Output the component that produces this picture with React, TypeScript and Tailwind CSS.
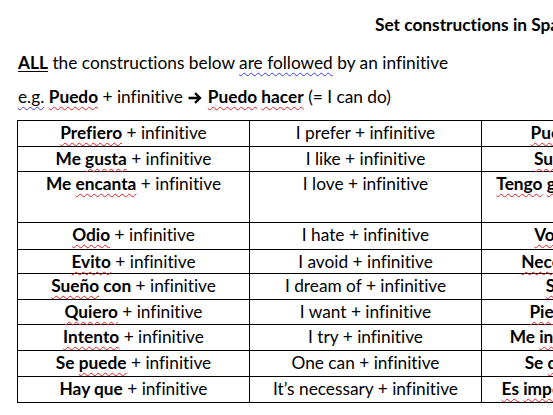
import React from 'react';

type Word = { t: string; sq?: boolean };
type Row = { h: string; a: Word[]; b: string; c: Word[] };

const ROWS: Row[] = [
    { h: 'h-[26px]', a: [{ t: 'Prefiero', sq: true }], b: 'I prefer', c: [{ t: 'Puedo', sq: true }] },
    { h: 'h-[25px]', a: [{ t: 'Me' }, { t: 'gusta', sq: true }], b: 'I like', c: [{ t: 'Suelo', sq: true }] },
    { h: 'h-[51px]', a: [{ t: 'Me' }, { t: 'encanta', sq: true }], b: 'I love', c: [{ t: 'Tengo', sq: true }, { t: 'ganas', sq: true }, { t: 'de' }] },
    { h: 'h-[27px]', a: [{ t: 'Odio', sq: true }], b: 'I hate', c: [{ t: 'Voy', sq: true }, { t: 'a' }] },
    { h: 'h-[24px]', a: [{ t: 'Evito', sq: true }], b: 'I avoid', c: [{ t: 'Necesito', sq: true }] },
    { h: 'h-[26px]', a: [{ t: 'Sueño', sq: true }, { t: 'con' }], b: 'I dream of', c: [{ t: 'Sé', sq: true }] },
    { h: 'h-[25px]', a: [{ t: 'Quiero', sq: true }], b: 'I want', c: [{ t: 'Pienso', sq: true }] },
    { h: 'h-[26px]', a: [{ t: 'Intento', sq: true }], b: 'I try', c: [{ t: 'Me' }, { t: 'interesa', sq: true }] },
    { h: 'h-[26px]', a: [{ t: 'Se' }, { t: 'puede', sq: true }], b: 'One can', c: [{ t: 'Se' }, { t: 'debe', sq: true }] },
    { h: 'h-[26px]', a: [{ t: 'Hay' }, { t: 'que' }], b: 'It’s necessary', c: [{ t: 'Es', sq: true }, { t: 'importante', sq: true }] },
];

const Squiggle: React.FC<{ children: React.ReactNode; blue?: boolean }> = ({ children, blue }) => (
    <span className={`underline decoration-wavy decoration-1 underline-offset-[3px] ${blue ? 'decoration-[#3b3bf0]' : 'decoration-[#e02020]'}`}>
        {children}
    </span>
);

const Phrase: React.FC<{ words: Word[] }> = ({ words }) => (
    <>
        <b className="font-bold">
            {words.map((w, i) => (
                <React.Fragment key={i}>
                    {i > 0 && ' '}
                    {w.sq ? <Squiggle>{w.t}</Squiggle> : w.t}
                </React.Fragment>
            ))}
        </b>
        {' + infinitive'}
    </>
);

const Arrow = () => (
    <svg width="14" height="12" viewBox="0 0 14 12" className="inline-block ml-[5px] mr-[6px] align-[-1px]">
        <path d="M0.5 6 H12 M7 1.2 L12 6 L7 10.8" fill="none" stroke="#000" strokeWidth="2.3" />
    </svg>
);

export default function App() {
    return (
        <div className="w-[553px] h-[415px] overflow-hidden bg-white text-black font-['Lato',sans-serif] text-[17.3px] [font-variant-ligatures:none]">
            <div className="pt-[13px] pl-[375px] whitespace-nowrap font-bold leading-[24px]">Set constructions in Spanish</div>

            <div className="pl-[18px] mt-[14px] whitespace-nowrap leading-[24px]">
                <b className="font-bold underline underline-offset-2">ALL</b> the constructions below{' '}
                <Squiggle blue>are followed</Squiggle> by an infinitive
            </div>

            <div className="pl-[18px] mt-[10px] whitespace-nowrap leading-[24px]">
                <Squiggle blue>e.g.</Squiggle> <b className="font-bold"><Squiggle>Puedo</Squiggle></b> + infinitive
                <Arrow />
                <b className="font-bold"><Squiggle>Puedo</Squiggle> <Squiggle>hacer</Squiggle></b> (= I can do)
            </div>

            <div className="ml-[17px] mt-[11px] w-[697px] border-t border-l border-black">
                {ROWS.map((r, i) => (
                    <div key={i} className={`flex border-b border-black ${r.h}`}>
                        <div className="w-[232px] shrink-0 border-r border-black text-center whitespace-nowrap leading-[24px]">
                            <Phrase words={r.a} />
                        </div>
                        <div className="w-[232px] shrink-0 border-r border-black text-center whitespace-nowrap leading-[24px]">
                            {r.b} + infinitive
                        </div>
                        <div className="w-[232px] shrink-0 border-r border-black text-center whitespace-nowrap leading-[24px]">
                            <Phrase words={r.c} />
                        </div>
                    </div>
                ))}
            </div>
        </div>
    );
}
